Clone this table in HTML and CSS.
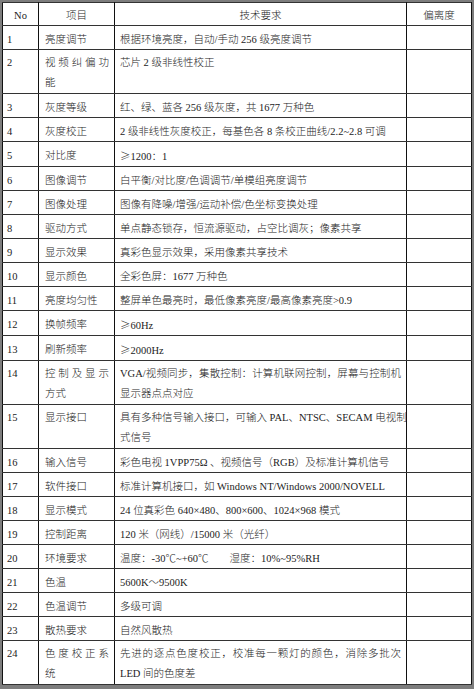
FILE: index.html
```html
<!DOCTYPE html>
<html lang="zh-CN">
<head>
<meta charset="utf-8">
<title>技术要求</title>
<link rel="stylesheet" href="styles.css">
</head>
<body>
<table class="spec">
  <colgroup>
    <col class="c-no"><col class="c-item"><col class="c-req"><col class="c-dev">
  </colgroup>
  <thead>
    <tr class="head"><th>No</th><th>项目</th><th>技术要求</th><th>偏离度</th></tr>
  </thead>
  <tbody>
    <tr><td class="no">1</td><td class="item">亮度调节</td><td class="req">根据环境亮度，自动/手动 256 级亮度调节</td><td></td></tr>
    <tr class="two"><td class="no">2</td><td class="item"><span class="jl">视频纠偏功</span>能</td><td class="req">芯片 2 级非线性校正</td><td></td></tr>
    <tr><td class="no">3</td><td class="item">灰度等级</td><td class="req">红、绿、蓝各 256 级灰度，共 1677 万种色</td><td></td></tr>
    <tr><td class="no">4</td><td class="item">灰度校正</td><td class="req">2 级非线性灰度校正，每基色各 8 条校正曲线/2.2~2.8 可调</td><td></td></tr>
    <tr><td class="no">5</td><td class="item">对比度</td><td class="req"><span class="wide">≥</span>1200：1</td><td></td></tr>
    <tr><td class="no">6</td><td class="item">图像调节</td><td class="req">白平衡/对比度/色调调节/单模组亮度调节</td><td></td></tr>
    <tr><td class="no">7</td><td class="item">图像处理</td><td class="req">图像有降噪/增强/运动补偿/色坐标变换处理</td><td></td></tr>
    <tr><td class="no">8</td><td class="item">驱动方式</td><td class="req">单点静态锁存，恒流源驱动，占空比调灰；像素共享</td><td></td></tr>
    <tr><td class="no">9</td><td class="item">显示效果</td><td class="req">真彩色显示效果，采用像素共享技术</td><td></td></tr>
    <tr><td class="no">10</td><td class="item">显示颜色</td><td class="req">全彩色屏：1677 万种色</td><td></td></tr>
    <tr><td class="no">11</td><td class="item">亮度均匀性</td><td class="req">整屏单色最亮时，最低像素亮度/最高像素亮度&gt;0.9</td><td></td></tr>
    <tr><td class="no">12</td><td class="item">换帧频率</td><td class="req"><span class="wide">≥</span>60Hz</td><td></td></tr>
    <tr><td class="no">13</td><td class="item">刷新频率</td><td class="req"><span class="wide">≥</span>2000Hz</td><td></td></tr>
    <tr class="two"><td class="no">14</td><td class="item"><span class="jl">控制及显示</span>方式</td><td class="req"><span class="jl">VGA/视频同步，集散控制：计算机联网控制，屏幕与控制机</span>显示器点点对应</td><td></td></tr>
    <tr class="two"><td class="no">15</td><td class="item">显示接口</td><td class="req"><span class="jl">具有多种信号输入接口，可输入 PAL、NTSC、SECAM 电视制</span>式信号</td><td></td></tr>
    <tr><td class="no">16</td><td class="item">输入信号</td><td class="req">彩色电视 1VPP75Ω 、视频信号（RGB）及标准计算机信号</td><td></td></tr>
    <tr><td class="no">17</td><td class="item">软件接口</td><td class="req">标准计算机接口，如 Windows NT/Windows 2000/NOVELL</td><td></td></tr>
    <tr><td class="no">18</td><td class="item">显示模式</td><td class="req">24 位真彩色 640×480、800×600、1024×968 模式</td><td></td></tr>
    <tr><td class="no">19</td><td class="item">控制距离</td><td class="req">120 米（网线）/15000 米（光纤）</td><td></td></tr>
    <tr><td class="no">20</td><td class="item">环境要求</td><td class="req">温度：-30℃~+60℃<span class="gap"></span>湿度：10%~95%RH</td><td></td></tr>
    <tr><td class="no">21</td><td class="item">色温</td><td class="req">5600K～9500K</td><td></td></tr>
    <tr><td class="no">22</td><td class="item">色温调节</td><td class="req">多级可调</td><td></td></tr>
    <tr><td class="no">23</td><td class="item">散热要求</td><td class="req">自然风散热</td><td></td></tr>
    <tr class="two"><td class="no">24</td><td class="item"><span class="jl">色度校正系</span>统</td><td class="req"><span class="jl">先进的逐点色度校正，校准每一颗灯的颜色，消除多批次</span>LED 间的色度差</td><td></td></tr>
  </tbody>
</table>
</body>
</html>
```

FILE: styles.css
```css
html, body {
  margin: 0;
  padding: 0;
}
body {
  background: #7d7d7d;
  width: 474px;
  height: 689px;
  overflow: hidden;
  font-family: "Liberation Serif", "Noto Sans CJK SC", serif;
  font-size: 10.5px;
  color: #1c1c1c;
}
.spec {
  margin: 2px 0 0 2px;
  width: 469px;
  table-layout: fixed;
  border-collapse: collapse;
  background: #fff;
  border: 1px solid #111;
}
.c-no { width: 36px; }
.c-item { width: 76px; }
.c-req { width: 292px; }
.c-dev { width: 65px; }

.spec th,
.spec td {
  border-left: 1px solid #111;
  border-right: 1px solid #111;
  border-top: 1px solid #333;
  border-bottom: 1px solid #333;
  padding: 5px 5px 0 5px;
  line-height: 18px;
  vertical-align: top;
  font-weight: 300;
  white-space: nowrap;
  overflow: hidden;
}
.spec th {
  font-weight: 300;
  text-align: center;
  padding: 3px 0 0 0;
  line-height: 19px;
}
.spec td.no { padding-left: 4px; }
.spec td.item { padding-left: 6px; padding-right: 5px; }
.spec td.req { padding-left: 5px; padding-right: 5px; }

.spec tr.two td {
  line-height: 20px;
  padding-top: 3px;
}
.jl {
  display: block;
  text-align: justify;
  text-align-last: justify;
}
.wide {
  font-family: "Noto Sans CJK SC", sans-serif;
  display: inline-block;
  width: 10.5px;
}
.gap {
  display: inline-block;
  width: 21px;
}
```
